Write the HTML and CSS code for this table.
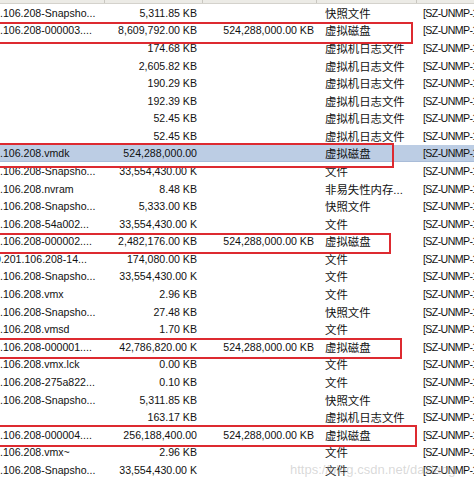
FILE: index.html
```html
<!DOCTYPE html>
<html lang="zh-CN">
<head>
<meta charset="utf-8">
<title>文件列表</title>
<link rel="stylesheet" href="styles.css">
</head>
<body>
<div class="view">
  <div class="header">
    <div class="hcell"></div><div class="hcell"></div><div class="hcell"></div><div class="hcell"></div><div class="hcell last"></div>
  </div>
  <div class="rows">
    <div class="row"><span class="name">.106.208-Snapsho...</span><span class="size">5,311.85 KB</span><span class="size2"></span><span class="type">快照文件</span><span class="path">[SZ-UNMP-10.201.106.208]</span></div>
    <div class="row"><span class="name">.106.208-000003....</span><span class="size">8,609,792.00 KB</span><span class="size2">524,288,000.00 KB</span><span class="type">虚拟磁盘</span><span class="path">[SZ-UNMP-10.201.106.208]</span></div>
    <div class="row"><span class="name"></span><span class="size">174.68 KB</span><span class="size2"></span><span class="type">虚拟机日志文件</span><span class="path">[SZ-UNMP-10.201.106.208]</span></div>
    <div class="row"><span class="name"></span><span class="size">2,605.82 KB</span><span class="size2"></span><span class="type">虚拟机日志文件</span><span class="path">[SZ-UNMP-10.201.106.208]</span></div>
    <div class="row"><span class="name"></span><span class="size">190.29 KB</span><span class="size2"></span><span class="type">虚拟机日志文件</span><span class="path">[SZ-UNMP-10.201.106.208]</span></div>
    <div class="row"><span class="name"></span><span class="size">192.39 KB</span><span class="size2"></span><span class="type">虚拟机日志文件</span><span class="path">[SZ-UNMP-10.201.106.208]</span></div>
    <div class="row"><span class="name"></span><span class="size">52.45 KB</span><span class="size2"></span><span class="type">虚拟机日志文件</span><span class="path">[SZ-UNMP-10.201.106.208]</span></div>
    <div class="row"><span class="name"></span><span class="size">52.45 KB</span><span class="size2"></span><span class="type">虚拟机日志文件</span><span class="path">[SZ-UNMP-10.201.106.208]</span></div>
    <div class="row selected"><span class="name">.106.208.vmdk</span><span class="size">524,288,000.00</span><span class="size2"></span><span class="type">虚拟磁盘</span><span class="path">[SZ-UNMP-10.201.106.208]</span></div>
    <div class="row"><span class="name">.106.208-Snapsho...</span><span class="size">33,554,430.00 K</span><span class="size2"></span><span class="type">文件</span><span class="path">[SZ-UNMP-10.201.106.208]</span></div>
    <div class="row"><span class="name">.106.208.nvram</span><span class="size">8.48 KB</span><span class="size2"></span><span class="type">非易失性内存...</span><span class="path">[SZ-UNMP-10.201.106.208]</span></div>
    <div class="row"><span class="name">.106.208-Snapsho...</span><span class="size">5,333.00 KB</span><span class="size2"></span><span class="type">快照文件</span><span class="path">[SZ-UNMP-10.201.106.208]</span></div>
    <div class="row"><span class="name">.106.208-54a002...</span><span class="size">33,554,430.00 K</span><span class="size2"></span><span class="type">文件</span><span class="path">[SZ-UNMP-10.201.106.208]</span></div>
    <div class="row"><span class="name">.106.208-000002....</span><span class="size">2,482,176.00 KB</span><span class="size2">524,288,000.00 KB</span><span class="type">虚拟磁盘</span><span class="path">[SZ-UNMP-10.201.106.208]</span></div>
    <div class="row"><span class="name"><span class="clip">0.201.106.208-14...</span></span><span class="size">174,080.00 KB</span><span class="size2"></span><span class="type">文件</span><span class="path">[SZ-UNMP-10.201.106.208]</span></div>
    <div class="row"><span class="name">.106.208-Snapsho...</span><span class="size">33,554,430.00 K</span><span class="size2"></span><span class="type">文件</span><span class="path">[SZ-UNMP-10.201.106.208]</span></div>
    <div class="row"><span class="name">.106.208.vmx</span><span class="size">2.96 KB</span><span class="size2"></span><span class="type">文件</span><span class="path">[SZ-UNMP-10.201.106.208]</span></div>
    <div class="row"><span class="name">.106.208-Snapsho...</span><span class="size">27.48 KB</span><span class="size2"></span><span class="type">快照文件</span><span class="path">[SZ-UNMP-10.201.106.208]</span></div>
    <div class="row"><span class="name">.106.208.vmsd</span><span class="size">1.70 KB</span><span class="size2"></span><span class="type">文件</span><span class="path">[SZ-UNMP-10.201.106.208]</span></div>
    <div class="row"><span class="name">.106.208-000001....</span><span class="size">42,786,820.00 K</span><span class="size2">524,288,000.00 KB</span><span class="type">虚拟磁盘</span><span class="path">[SZ-UNMP-10.201.106.208]</span></div>
    <div class="row"><span class="name">.106.208.vmx.lck</span><span class="size">0.00 KB</span><span class="size2"></span><span class="type">文件</span><span class="path">[SZ-UNMP-10.201.106.208]</span></div>
    <div class="row"><span class="name">.106.208-275a822...</span><span class="size">0.10 KB</span><span class="size2"></span><span class="type">文件</span><span class="path">[SZ-UNMP-10.201.106.208]</span></div>
    <div class="row"><span class="name">.106.208-Snapsho...</span><span class="size">5,311.85 KB</span><span class="size2"></span><span class="type">快照文件</span><span class="path">[SZ-UNMP-10.201.106.208]</span></div>
    <div class="row"><span class="name"></span><span class="size">163.17 KB</span><span class="size2"></span><span class="type">虚拟机日志文件</span><span class="path">[SZ-UNMP-10.201.106.208]</span></div>
    <div class="row"><span class="name">.106.208-000004....</span><span class="size">256,188,400.00</span><span class="size2">524,288,000.00 KB</span><span class="type">虚拟磁盘</span><span class="path">[SZ-UNMP-10.201.106.208]</span></div>
    <div class="row"><span class="name">.106.208.vmx~</span><span class="size">2.96 KB</span><span class="size2"></span><span class="type">文件</span><span class="path">[SZ-UNMP-10.201.106.208]</span></div>
    <div class="row"><span class="name">.106.208-Snapsho...</span><span class="size">33,554,430.00 K</span><span class="size2"></span><span class="type">文件</span><span class="path">[SZ-UNMP-10.201.106.208]</span></div>
  </div>
  <div class="mark m1"></div>
  <div class="mark m2"></div>
  <div class="mark m3"></div>
  <div class="mark m4"></div>
  <div class="mark m5"></div>
  <div class="watermark">https://blog.csdn.net/daxiang</div>
</div>
</body>
</html>
```

FILE: styles.css
```css
html, body {
  margin: 0;
  padding: 0;
  background: #ffffff;
  overflow: hidden;
}
.view {
  position: relative;
  width: 474px;
  height: 486px;
  overflow: hidden;
  font-family: "Liberation Sans", "Noto Sans CJK SC", sans-serif;
  font-size: 10.6px;
  color: #111;
}
.header {
  display: grid;
  grid-template-columns: 105px 98px 114px 100px 1fr;
  height: 3px;
  background: #ecebe6;
  border-bottom: 1px solid #d4d2cc;
}
.hcell {
  border-right: 1px solid #c9c7c0;
}
.hcell.last { border-right: none; }
.rows {
  display: flex;
  flex-direction: column;
}
.row {
  display: grid;
  grid-template-columns: 105px 98px 114px 100px 1fr;
  height: 17.58px;
  align-items: center;
  white-space: nowrap;
}
.row.selected {
  background: #bccde4;
  box-shadow: inset 0 -1px 0 #a9bcd8;
}
.row > span {
  overflow: hidden;
  white-space: nowrap;
}
.name {
  padding-left: 0;
}
.clip {
  display: inline-block;
  margin-left: -5px;
}
.size {
  text-align: right;
  padding-right: 6px;
}
.size2 {
  text-align: right;
  padding-right: 3px;
}
.type {
  padding-left: 8px;
  font-size: 11.4px;
}
.path {
  padding-left: 6px;
  letter-spacing: -0.6px;
}
.mark {
  position: absolute;
  left: -4px;
  border: 2px solid #dd2a30;
  box-sizing: border-box;
}
.m1 { top: 22px; height: 22px; width: 417px; }
.m2 { top: 143px; height: 25px; width: 398px; }
.m3 { top: 233px; height: 21px; width: 395px; }
.m4 { top: 338px; height: 21px; width: 406px; }
.m5 { top: 425px; height: 22px; width: 421px; }
.watermark {
  position: absolute;
  left: 290px;
  top: 462px;
  font-family: "Liberation Sans", sans-serif;
  font-size: 13px;
  color: rgba(170, 170, 170, 0.45);
  white-space: nowrap;
}
```
